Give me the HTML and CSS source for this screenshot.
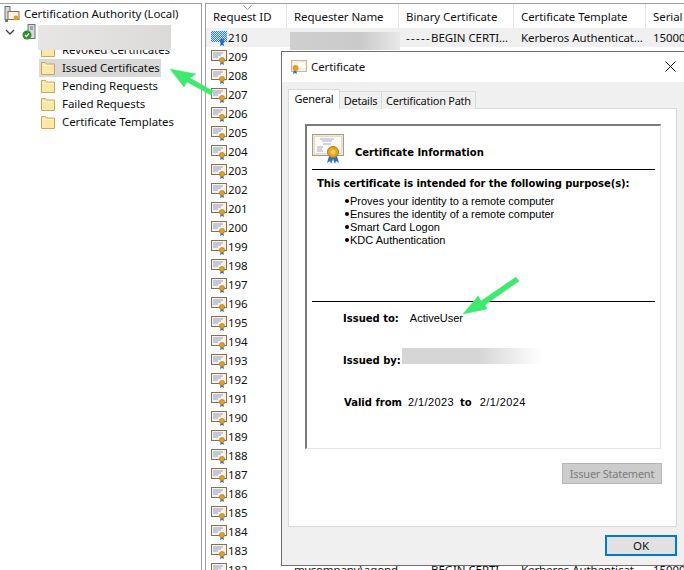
FILE: index.html
```html
<!DOCTYPE html>
<html lang="en">
<head>
<meta charset="utf-8">
<title>Certification Authority</title>
<link rel="stylesheet" href="styles.css">
</head>
<body>
<svg class="defs" width="0" height="0" aria-hidden="true">
  <defs>
    <pattern id="dither" width="2" height="2" patternUnits="userSpaceOnUse">
      <rect width="2" height="2" fill="#cfe3f7"/>
      <rect width="1" height="1" fill="#2f7fd6"/>
      <rect x="1" y="1" width="1" height="1" fill="#2f7fd6"/>
    </pattern>
    <symbol id="cert" viewBox="0 0 16 16">
      <rect x="0.5" y="1.5" width="15" height="10" fill="#f7f3ea" stroke="#8a6f4d"/>
      <path d="M2 4h10M2 6h8M2 8h5" stroke="#8d9bc9" fill="none"/>
      <path d="M10 12l-1 4 2-1 2 1-1-4z" fill="#2a6fd0"/>
      <circle cx="11" cy="11" r="2.6" fill="#e0a020" stroke="#a87510" stroke-width=".6"/>
    </symbol>
    <symbol id="certsel" viewBox="0 0 16 16">
      <rect x="0" y="1" width="16" height="11" fill="url(#dither)"/>
      <path d="M10 12l-1 4 2-1 2 1-1-4z" fill="#1c5fc0"/>
      <circle cx="11" cy="11" r="2.4" fill="#2a6fd0"/>
    </symbol>
    <symbol id="folder" viewBox="0 0 16 16">
      <path d="M1.5 2.5h4l1 1.5h8v10.500h-13z" fill="#fce8a6" stroke="#c9a85a"/>
      <path d="M2.500 5.500h11" stroke="#fff3c9"/>
    </symbol>
  </defs>
</svg>

<div class="mmc">
  <nav class="tree">
    <div class="node root">
      <svg class="ic" viewBox="0 0 16 16"><rect x="1" y="0.5" width="5" height="13" fill="#d6d9dc" stroke="#6d7378"/><rect x="4" y="5.500" width="11" height="8" fill="#f7f3ea" stroke="#8a6f4d"/><circle cx="12" cy="12" r="2.4" fill="#e0a020"/><rect x="1" y="13" width="3" height="3" fill="#3a9a3a"/></svg>
      <span>Certification Authority (Local)</span>
    </div>
    <div class="node server">
      <svg class="chev" viewBox="0 0 10 10"><path d="M1 3l4 4 4-4" fill="none" stroke="#404040" stroke-width="1.3"/></svg>
      <svg class="ic" viewBox="0 0 16 16"><rect x="6" y="0.5" width="7" height="14" fill="#d6d9dc" stroke="#6d7378"/><path d="M8 3h3M8 5h3" stroke="#6d7378"/><circle cx="5" cy="11" r="4.500" fill="#2f8f2f"/><path d="M3 11l1.500 1.500L7 9.500" fill="none" stroke="#fff" stroke-width="1.2"/></svg>
    </div>
    <div class="node leaf"><svg class="ic"><use href="#folder"/></svg><span>Revoked Certificates</span></div>
    <div class="node leaf selected"><svg class="ic"><use href="#folder"/></svg><span>Issued Certificates</span></div>
    <div class="node leaf"><svg class="ic"><use href="#folder"/></svg><span>Pending Requests</span></div>
    <div class="node leaf"><svg class="ic"><use href="#folder"/></svg><span>Failed Requests</span></div>
    <div class="node leaf"><svg class="ic"><use href="#folder"/></svg><span>Certificate Templates</span></div>
  </nav>

  <main class="list">
    <div class="head">
      <div class="col c1">Request ID</div>
      <div class="col c2">Requester Name</div>
      <div class="col c3">Binary Certificate</div>
      <div class="col c4">Certificate Template</div>
      <div class="col c5">Serial</div>
    </div>
    <div class="row first"><div class="c1 id"><svg class="ic"><use href="#certsel"/></svg>210</div><div class="c2"></div><div class="c3"><span class="dashes">-----</span>BEGIN CERTI...</div><div class="c4">Kerberos Authenticat...</div><div class="c5">15000</div></div>
    <div class="row"><div class="c1 id"><svg class="ic"><use href="#cert"/></svg>209</div></div>
    <div class="row"><div class="c1 id"><svg class="ic"><use href="#cert"/></svg>208</div></div>
    <div class="row"><div class="c1 id"><svg class="ic"><use href="#cert"/></svg>207</div></div>
    <div class="row"><div class="c1 id"><svg class="ic"><use href="#cert"/></svg>206</div></div>
    <div class="row"><div class="c1 id"><svg class="ic"><use href="#cert"/></svg>205</div></div>
    <div class="row"><div class="c1 id"><svg class="ic"><use href="#cert"/></svg>204</div></div>
    <div class="row"><div class="c1 id"><svg class="ic"><use href="#cert"/></svg>203</div></div>
    <div class="row"><div class="c1 id"><svg class="ic"><use href="#cert"/></svg>202</div></div>
    <div class="row"><div class="c1 id"><svg class="ic"><use href="#cert"/></svg>201</div></div>
    <div class="row"><div class="c1 id"><svg class="ic"><use href="#cert"/></svg>200</div></div>
    <div class="row"><div class="c1 id"><svg class="ic"><use href="#cert"/></svg>199</div></div>
    <div class="row"><div class="c1 id"><svg class="ic"><use href="#cert"/></svg>198</div></div>
    <div class="row"><div class="c1 id"><svg class="ic"><use href="#cert"/></svg>197</div></div>
    <div class="row"><div class="c1 id"><svg class="ic"><use href="#cert"/></svg>196</div></div>
    <div class="row"><div class="c1 id"><svg class="ic"><use href="#cert"/></svg>195</div></div>
    <div class="row"><div class="c1 id"><svg class="ic"><use href="#cert"/></svg>194</div></div>
    <div class="row"><div class="c1 id"><svg class="ic"><use href="#cert"/></svg>193</div></div>
    <div class="row"><div class="c1 id"><svg class="ic"><use href="#cert"/></svg>192</div></div>
    <div class="row"><div class="c1 id"><svg class="ic"><use href="#cert"/></svg>191</div></div>
    <div class="row"><div class="c1 id"><svg class="ic"><use href="#cert"/></svg>190</div></div>
    <div class="row"><div class="c1 id"><svg class="ic"><use href="#cert"/></svg>189</div></div>
    <div class="row"><div class="c1 id"><svg class="ic"><use href="#cert"/></svg>188</div></div>
    <div class="row"><div class="c1 id"><svg class="ic"><use href="#cert"/></svg>187</div></div>
    <div class="row"><div class="c1 id"><svg class="ic"><use href="#cert"/></svg>186</div></div>
    <div class="row"><div class="c1 id"><svg class="ic"><use href="#cert"/></svg>185</div></div>
    <div class="row"><div class="c1 id"><svg class="ic"><use href="#cert"/></svg>184</div></div>
    <div class="row"><div class="c1 id"><svg class="ic"><use href="#cert"/></svg>183</div></div>
    <div class="row"><div class="c1 id"><svg class="ic"><use href="#cert"/></svg>182</div><div class="c2">mycompany\agond</div><div class="c3"><span class="dashes">-----</span>BEGIN CERTI...</div><div class="c4">Kerberos Authenticat...</div><div class="c5">15000</div></div>
  </main>
</div>

<div class="blur blur-server"></div>
<div class="blur blur-name"></div>
<svg class="sort" viewBox="0 0 9 5"><path d="M0.500 0.500l4 4 4-4" fill="none" stroke="#a0a0a0"/></svg>

<section class="dialog">
  <header class="titlebar">
    <svg class="title-ic" viewBox="0 0 16 16"><rect x="0.500" y="1.500" width="15" height="11" fill="#f7efe0" stroke="#c8b69a"/><rect x="7" y="4" width="7" height="5" fill="#fff"/><path d="M3 11l-1 4 2-1 2 1-1-4z" fill="#2a6fd0"/><circle cx="4.500" cy="9" r="3" fill="#e0a020"/></svg>
    <span class="title">Certificate</span>
    <svg class="close" viewBox="0 0 11 11"><path d="M0.500 0.500l10 10M10.500 0.500l-10 10" stroke="#111" fill="none"/></svg>
  </header>
  <div class="body">
    <div class="tabs">
      <div class="tab active">General</div>
      <div class="tab t-details">Details</div>
      <div class="tab t-path">Certification Path</div>
    </div>
    <div class="panel">
      <div class="info">
        <div class="info-head">
          <svg class="big-cert" viewBox="0 0 32 30">
            <rect x="0.500" y="0.500" width="31" height="21" fill="#ece7dc" stroke="#a89a84"/>
            <rect x="2.500" y="2.500" width="27" height="17" fill="#fbf9f4" stroke="#cfc6b4" stroke-dasharray="1 1"/>
            <path d="M8 5h14M10 7h10M11 10h8M5 13h6M5 15h5M5 17h6" stroke="#a6add0" fill="none"/>
            <path d="M17 22l-2 7 3-2 1 3 2-5 2 5 1-3 3 2-2-7z" fill="#2a6fd0"/>
            <circle cx="21" cy="18" r="5.500" fill="#e3a81f" stroke="#b07a10"/>
            <circle cx="21" cy="18" r="2.500" fill="#f3c95a"/>
          </svg>
          <h1>Certificate Information</h1>
        </div>
        <div class="rule"></div>
        <h2>This certificate is intended for the following purpose(s):</h2>
        <ul class="purposes">
          <li>Proves your identity to a remote computer</li>
          <li>Ensures the identity of a remote computer</li>
          <li>Smart Card Logon</li>
          <li>KDC Authentication</li>
        </ul>
        <div class="rule lower"></div>
        <dl class="fields">
          <div class="field f-to"><dt>Issued to:</dt><dd>ActiveUser</dd></div>
          <div class="field f-by"><dt>Issued by:</dt><dd></dd></div>
          <div class="field f-valid"><dt>Valid from</dt><dd>2/1/2023</dd><dt class="to">to</dt><dd class="until">2/1/2024</dd></div>
        </dl>
      </div>
      <div class="issuer-row"><button class="issuer" disabled>Issuer Statement</button></div>
    </div>
    <div class="footer"><button class="ok">OK</button></div>
  </div>
</section>
<div class="blur blur-issuer"></div>

<svg class="arrow" viewBox="0 0 684 570">
  <path d="M170 69L196 74L190 78L213 91L211 95L187 82L184 87Z"/>
</svg>
<svg class="arrow" viewBox="0 0 684 570">
  <path d="M463 314L478 296L481 301L516 277L519 281L485 305L487 309Z"/>
</svg>
</body>
</html>
```

FILE: styles.css
```css
* { box-sizing: border-box; }
html, body { margin: 0; padding: 0; }
body {
  position: relative;
  width: 684px;
  height: 570px;
  overflow: hidden;
  background: #fff;
  color: #111;
  font: 11.5px/16px "Noto Sans", sans-serif;
  letter-spacing: -.08px;
}
.defs { position: absolute; }
.mmc {
  display: grid;
  grid-template-columns: 202px 1fr;
  column-gap: 3px;
  height: 570px;
  padding-top: 3px;
}
.ic { width: 16px; height: 16px; flex: none; }

.tree {
  border-top: 1px solid #a0a0a0;
  border-right: 1px solid #a0a0a0;
  padding-top: 1px;
  overflow: hidden;
}
.node { display: flex; align-items: center; height: 18px; white-space: nowrap; }
.root { padding-left: 4px; }
.root span { margin-left: 4px; }
.server { padding-left: 5px; }
.chev { width: 10px; height: 10px; margin-right: 7px; }
.leaf { margin-left: 39px; width: 122px; padding-left: 1px; }
.leaf span { margin-left: 6px; }
.selected { background: #d9d9d9; }

.list {
  border-top: 1px solid #a0a0a0;
  border-left: 1px solid #a0a0a0;
  overflow: hidden;
}
.head, .row {
  display: grid;
  grid-template-columns: 81px 112px 115px 132px 60px;
  white-space: nowrap;
}
.head { height: 24px; }
.col {
  padding: 5px 0 0 7px;
  border-right: 1px solid #e5e5e5;
  overflow: hidden;
}
.row { height: 19px; line-height: 19px; }
.row > div { padding-left: 7px; overflow: hidden; }
.row .id { display: flex; align-items: center; gap: 1px; padding-left: 5px; }
.dashes { letter-spacing: 1.3px; }
.first { background: #f0f0f0; }

.blur { position: absolute; }
.blur-server { left: 38px; top: 25px; width: 133px; height: 25px; background: linear-gradient(90deg, #e8e6e4, #dbdad8); }
.blur-name { left: 290px; top: 32px; width: 110px; height: 18px; background: linear-gradient(90deg, #cfcfcf 0, #cacaca 65%, #e8e8e8 100%); }
.blur-issuer { left: 402px; top: 348px; width: 140px; height: 16px; background: linear-gradient(90deg, #d6d6d6 0, #d6d6d6 55%, #fff 100%); }
.sort { position: absolute; left: 243px; top: 5px; width: 9px; height: 5px; }

.dialog {
  position: absolute;
  left: 281px;
  top: 51px;
  width: 404px;
  height: 515px;
  border: 1px solid #6f6f6f;
  background: #f0f0f0;
  display: flex;
  flex-direction: column;
}
.titlebar {
  display: flex;
  align-items: center;
  height: 30px;
  flex: none;
  background: #fff;
  padding: 0 8px 0 9px;
}
.title-ic { width: 16px; height: 16px; }
.title { margin-left: 4px; }
.close { width: 11px; height: 11px; margin-left: auto; margin-top: -1px; }
.body { flex: 1; padding: 7px 7px 0 6px; display: flex; flex-direction: column; }
.tabs { display: flex; align-items: flex-end; height: 20px; position: relative; z-index: 1; margin-bottom: -1px; }
.tab {
  height: 18px;
  line-height: 17px;
  text-align: center;
  border: 1px solid #d9d9d9;
  border-bottom: none;
  border-left: none;
  background: #f0f0f0;
  white-space: nowrap;
  font-size: 11px;
  letter-spacing: -.25px;
}
.tab.active { width: 52px; height: 20px; background: #fff; border-left: 1px solid #d9d9d9; line-height: 18px; }
.t-details { width: 42px; }
.t-path { width: 94px; }
.panel {
  background: #fff;
  border: 1px solid #d9d9d9;
  height: 419px;
  flex: none;
  padding: 15px 15px 0 16px;
}
.info {
  height: 325px;
  border: 1px solid #e3e3e3;
  border-top: 2px solid #7a7a7a;
  border-left: 2px solid #7a7a7a;
  padding: 8px 5px 0 5px;
  font: 11px/13px "Liberation Sans", sans-serif;
  letter-spacing: 0;
  color: #000;
}
.info-head { display: flex; align-items: flex-start; height: 35px; }
.big-cert { width: 32px; height: 30px; flex: none; }
.info-head h1 { margin: 12px 0 0 11px; font: bold 10px/13px "DejaVu Sans", sans-serif; }
.rule { height: 1px; background: #000; }
.info h2 { margin: 7px 0 0 5px; font: bold 10px/14px "DejaVu Sans", sans-serif; letter-spacing: -.08px; white-space: nowrap; }
.purposes { list-style: none; margin: 4px 0 0 0; padding: 0 0 0 33px; }
.purposes li { height: 13px; white-space: nowrap; }
.purposes li::before { content: ""; display: inline-block; width: 4px; height: 4px; border-radius: 50%; background: #000; margin: 0 1px 2px 0; }
.rule.lower { margin-top: 54px; }
.fields { margin: 0; }
.field { display: flex; white-space: nowrap; }
.field dt { font: bold 10px/13px "DejaVu Sans", sans-serif; }
.field dd { margin: 0; }
.f-to { margin: 10px 0 0 31px; }
.f-to dd { margin-left: 11px; }
.f-by { margin: 29px 0 0 31px; }
.f-valid { margin: 29px 0 0 32px; }
.f-valid dd { margin-left: 6px; letter-spacing: .4px; }
.f-valid .until { margin-left: 8px; }
.f-valid .to { margin-left: 6px; }
.issuer-row { display: flex; justify-content: flex-end; margin: 14px -1px 0 0; }
.issuer {
  width: 100px;
  height: 21px;
  padding: 0;
  border: 1px solid #b5b5b5;
  background: #cccccc;
  color: #7d7d7d;
  font: 11px "Noto Sans", sans-serif;
  letter-spacing: -.25px;
}
.footer { display: flex; justify-content: flex-end; margin-top: 8px; }
.ok {
  width: 72px;
  height: 21px;
  padding: 0;
  border: 2px solid #0078d7;
  background: #e1e1e1;
  color: #111;
  font: 11.5px "Noto Sans", sans-serif;
}
.arrow { position: absolute; left: 0; top: 0; width: 684px; height: 570px; pointer-events: none; }
.arrow path { fill: #3fe86f; stroke: #3fe86f; stroke-width: .5; }
```
